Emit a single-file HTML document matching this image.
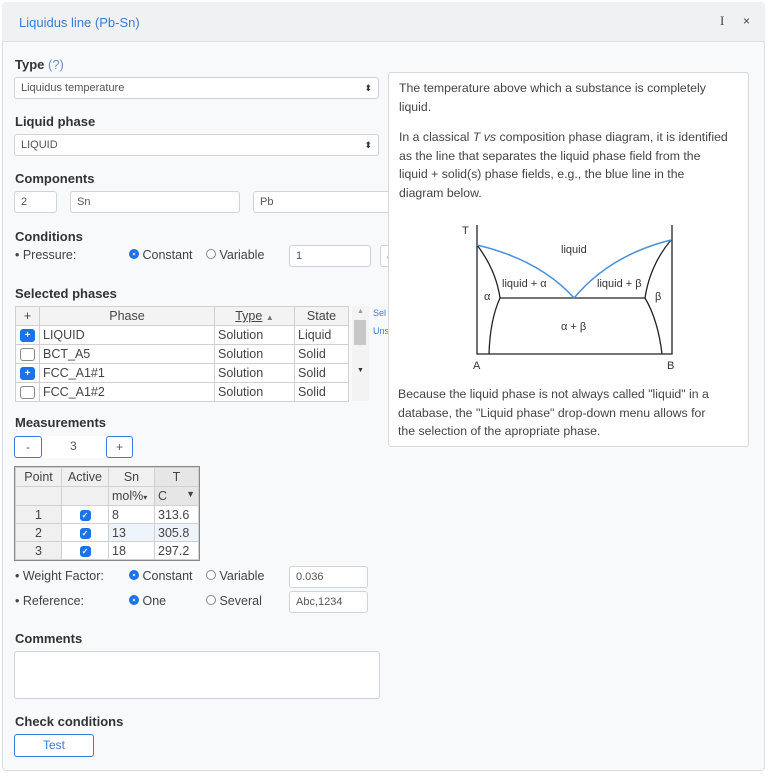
<!DOCTYPE html>
<html><head><meta charset="utf-8"><style>
*{box-sizing:border-box}
body{margin:0;width:768px;height:776px;background:#fff;font-family:"Liberation Sans",sans-serif;color:#212529;position:relative;overflow:hidden}
.a{position:absolute}
.card{left:2px;top:2px;width:763px;height:769px;border:1px solid #dcdfe2;border-radius:4px;background:#f8f9fa}
.hdr{left:2px;top:2px;width:763px;height:40px;background:#f0f1f2;border-bottom:1px solid #dcdfe2;border-radius:4px 4px 0 0}
.lbl{font-size:13px;font-weight:bold;color:#333}
.inp{background:#fff;border:1px solid #ced4da;border-radius:3px;font-size:11px;color:#555;padding:0 6px;display:flex;align-items:center}
.t{font-size:12.5px;color:#444}
.rad{width:10px;height:10px;border-radius:50%;display:inline-block}
.on{background:#fff;border:3px solid #1a73e8;box-shadow:0 0 0 1px #1a73e8 inset}
.off{border:1px solid #888;background:#fff}
table{border-collapse:collapse;font-size:12.5px;color:#444}
td{border:1px solid #d0d0d0;padding:0 3px;height:19px}
.m td{height:18px}
.cb{display:inline-block;width:15px;height:13px;border:1px solid #888;border-radius:3px;background:#fff;vertical-align:middle}
.cbon{background:#1a73e8;border-color:#1a73e8;color:#fff;font-size:10px;line-height:12px;text-align:center;font-weight:bold}
.pop{left:388px;top:72px;width:361px;height:375px;background:#fff;border:1px solid #d8d8d8;border-radius:3px;font-size:12.3px;color:#444;line-height:18.5px;padding:6px 2px 6px 10px;white-space:nowrap}
.pop p{margin:0 0 12px}
</style></head><body>
<div class="a card"></div>
<div class="a hdr"></div>
<div class="a" style="left:19px;top:15px;font-size:13px;color:#3a7bd5">Liquidus line (Pb-Sn)</div>
<div class="a" style="left:720px;top:13px;font-size:13px;color:#444;font-family:'Liberation Serif',serif">I</div>
<div class="a" style="left:743px;top:14px;font-size:12px;color:#444">×</div>

<div class="a lbl" style="left:15px;top:57px">Type <span style="font-weight:normal;color:#6a8fc4">(?)</span></div>
<div class="a inp" style="left:14px;top:77px;width:365px;height:22px">Liquidus temperature<span style="margin-left:auto;font-size:9px;color:#333">⬍</span></div>
<div class="a lbl" style="left:15px;top:114px">Liquid phase</div>
<div class="a inp" style="left:14px;top:134px;width:365px;height:22px">LIQUID<span style="margin-left:auto;font-size:9px;color:#333">⬍</span></div>
<div class="a lbl" style="left:15px;top:171px">Components</div>
<div class="a inp" style="left:14px;top:191px;width:43px;height:22px">2</div>
<div class="a inp" style="left:70px;top:191px;width:170px;height:22px">Sn</div>
<div class="a inp" style="left:253px;top:191px;width:140px;height:22px">Pb</div>
<div class="a lbl" style="left:15px;top:229px">Conditions</div>
<div class="a t" style="left:15px;top:248px">• Pressure:</div>
<div class="a t" style="left:129px;top:248px"><span class="rad on"></span> Constant</div>
<div class="a t" style="left:206px;top:248px"><span class="rad off"></span> Variable</div>
<div class="a inp" style="left:289px;top:245px;width:82px;height:22px">1</div>
<div class="a inp" style="left:380px;top:245px;width:20px;height:22px">a</div>

<div class="a lbl" style="left:15px;top:286px">Selected phases</div>
<div class="a" style="left:15px;top:306px;background:#fff">
<table style="width:334px">
<tr style="background:#f3f3f3"><td style="width:24px;text-align:center">+</td><td style="text-align:center;width:175px">Phase</td><td style="width:80px;text-align:center"><u>Type</u> <span style="font-size:8px;color:#777">▲</span></td><td style="text-align:center">State</td></tr>
<tr><td style="text-align:center"><span class="cb cbon">+</span></td><td>LIQUID</td><td>Solution</td><td>Liquid</td></tr>
<tr><td style="text-align:center"><span class="cb"></span></td><td>BCT_A5</td><td>Solution</td><td>Solid</td></tr>
<tr><td style="text-align:center"><span class="cb cbon">+</span></td><td>FCC_A1#1</td><td>Solution</td><td>Solid</td></tr>
<tr><td style="text-align:center"><span class="cb"></span></td><td>FCC_A1#2</td><td>Solution</td><td>Solid</td></tr>
</table></div>
<div class="a" style="left:352px;top:306px;width:17px;height:95px;background:#f3f3f3"></div>
<div class="a" style="left:357px;top:308px;font-size:7px;color:#999">▲</div>
<div class="a" style="left:354px;top:320px;width:12px;height:25px;background:#c8c8c8"></div>
<div class="a" style="left:357px;top:367px;font-size:7px;color:#333">▼</div>
<div class="a" style="left:373px;top:308px;font-size:9px;color:#3a7bd5">Sel</div>
<div class="a" style="left:373px;top:326px;font-size:9px;color:#3a7bd5">Uns</div>

<div class="a lbl" style="left:15px;top:415px">Measurements</div>
<div class="a" style="left:14px;top:436px;width:119px;height:22px;background:#fff;border-radius:3px"></div>
<div class="a" style="left:14px;top:436px;width:28px;height:22px;border:1px solid #3a7bd5;border-radius:3px;text-align:center;font-size:12px;line-height:20px;color:#555">-</div>
<div class="a" style="left:70px;top:439px;font-size:12px;color:#555">3</div>
<div class="a" style="left:106px;top:436px;width:27px;height:22px;border:1px solid #3a7bd5;border-radius:3px;text-align:center;font-size:12px;line-height:20px;color:#555">+</div>
<div class="a" style="left:14px;top:466px;border:1px solid #888">
<table class="m" style="width:184px">
<tr style="background:#f0f0f0"><td style="width:46px;text-align:center;height:19px">Point</td><td style="width:47px;text-align:center">Active</td><td style="width:46px;text-align:center">Sn</td><td style="text-align:center;background:#e6e6e6">T</td></tr>
<tr style="background:#f0f0f0"><td style="height:19px"></td><td></td><td>mol%<span style="font-size:8px">▾</span></td><td style="background:#e6e6e6">C <span style="float:right;font-size:9px">▼</span></td></tr>
<tr><td style="text-align:center;background:#f0f0f0">1</td><td style="text-align:center;background:#fff"><span class="cb cbon" style="width:11px;height:11px;font-size:8px;line-height:10px">✓</span></td><td style="background:#fff">8</td><td style="background:#fff">313.6</td></tr>
<tr><td style="text-align:center;background:#f0f0f0">2</td><td style="text-align:center;background:#fff"><span class="cb cbon" style="width:11px;height:11px;font-size:8px;line-height:10px">✓</span></td><td style="background:#eef4fb">13</td><td style="background:#eef4fb">305.8</td></tr>
<tr><td style="text-align:center;background:#f0f0f0">3</td><td style="text-align:center;background:#fff"><span class="cb cbon" style="width:11px;height:11px;font-size:8px;line-height:10px">✓</span></td><td style="background:#fff">18</td><td style="background:#fff">297.2</td></tr>
</table></div>
<div class="a t" style="left:15px;top:569px">• Weight Factor:</div>
<div class="a t" style="left:129px;top:569px"><span class="rad on"></span> Constant</div>
<div class="a t" style="left:206px;top:569px"><span class="rad off"></span> Variable</div>
<div class="a inp" style="left:289px;top:566px;width:79px;height:22px">0.036</div>
<div class="a t" style="left:15px;top:594px">• Reference:</div>
<div class="a t" style="left:129px;top:594px"><span class="rad on"></span> One</div>
<div class="a t" style="left:206px;top:594px"><span class="rad off"></span> Several</div>
<div class="a inp" style="left:289px;top:591px;width:79px;height:22px">Abc,1234</div>

<div class="a lbl" style="left:15px;top:631px">Comments</div>
<div class="a" style="left:14px;top:651px;width:366px;height:48px;background:#fff;border:1px solid #ced4da;border-radius:3px"></div>
<div class="a lbl" style="left:15px;top:714px">Check conditions</div>
<div class="a" style="left:14px;top:734px;width:80px;height:23px;border:1px solid #3a7bd5;border-radius:3px;text-align:center;font-size:12px;line-height:21px;color:#3a7bd5;background:#fff">Test</div>

<div class="a pop">
<p>The temperature above which a substance is completely<br>liquid.</p>
<p>In a classical <i>T vs</i> composition phase diagram, it is identified<br>as the line that separates the liquid phase field from the<br>liquid + solid(s) phase fields, e.g., the blue line in the<br>diagram below.</p>
</div>
<svg class="a" style="left:440px;top:215px" width="250" height="160" viewBox="440 215 250 160">
<g fill="none" stroke="#222" stroke-width="1.3">
<path d="M477 225V354H672V225"/>
<path d="M500 298H645"/>
<path d="M477 245Q496 270 500 298Q490 320 489 354"/>
<path d="M671 240Q650 265 645 298Q658 320 662 354"/>
</g>
<path d="M477 245Q540 260 574 298Q610 255 671 240" fill="none" stroke="#4a90d9" stroke-width="1.5"/>
<g font-family="Liberation Sans,sans-serif" font-size="11" fill="#333">
<text x="462" y="234">T</text><text x="561" y="253">liquid</text>
<text x="502" y="287">liquid + α</text><text x="597" y="287">liquid + β</text>
<text x="484" y="300">α</text><text x="655" y="300">β</text>
<text x="561" y="330">α + β</text><text x="473" y="369">A</text><text x="667" y="369">B</text>
</g></svg>
<div class="a" style="left:398px;top:385px;width:345px;font-size:12.3px;color:#444;line-height:18.5px;white-space:nowrap">Because the liquid phase is not always called "liquid" in a<br>database, the "Liquid phase" drop-down menu allows for<br>the selection of the apropriate phase.</div>
</body></html>
